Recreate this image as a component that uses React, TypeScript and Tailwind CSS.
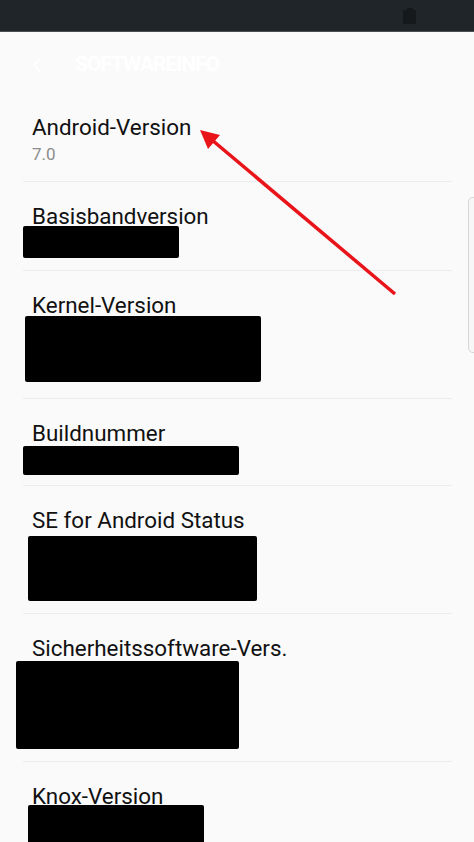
import React from "react";

type Row = {
  title: string;
  sub?: string;
  box?: string;
  pb: string;
};

// redaction boxes are placed per row, the way they sit in the screenshot
const ROWS: Row[] = [
  { title: "Android-Version", sub: "7.0", pb: "pb-[17px]" },
  { title: "Basisbandversion", box: "ml-[23px] w-[156px] h-[32px] -mt-[3px]", pb: "pb-[12px]" },
  { title: "Kernel-Version", box: "ml-[25px] w-[236px] h-[66px] -mt-[2px]", pb: "pb-[16px]" },
  { title: "Buildnummer", box: "ml-[23px] w-[216px] h-[29px] mt-0", pb: "pb-[10px]" },
  { title: "SE for Android Status", box: "ml-[28px] w-[229px] h-[65px] mt-[3px]", pb: "pb-[12px]" },
  { title: "Sicherheitssoftware-Vers.", box: "ml-[16px] w-[223px] h-[88px] mt-0", pb: "pb-[12px]" },
  { title: "Knox-Version", box: "ml-[28px] w-[176px] h-[50px] -mt-[4px]", pb: "pb-[12px]" },
];

function StatusBar() {
  return (
    <div className="h-[32px] shrink-0 bg-[#1f2528] border-b border-[#4b5053] flex items-start justify-end pr-[58px] pt-[8px]">
      {/* dim battery glyph */}
      <div className="flex flex-col items-center">
        <div className="w-[6px] h-[2px] bg-[#15191b] rounded-t-[1px]" />
        <div className="w-[13px] h-[14px] bg-[#15191b] rounded-[1px]" />
      </div>
    </div>
  );
}

function Header() {
  return (
    <div className="h-[64px] shrink-0 flex items-start pt-[19px]">
      <svg width="10" height="16" viewBox="0 0 10 16" className="ml-[32px] mt-[6px]">
        <path d="M8 1 L2 8 L8 15" fill="none" stroke="#ffffff" strokeWidth="1.6" />
      </svg>
      <span className="ml-[33px] text-[21px] leading-[26px] font-bold text-white tracking-[-0.05em]">
        SOFTWAREINFO
      </span>
    </div>
  );
}

export default function App() {
  return (
    <div className="relative w-[474px] h-[842px] overflow-hidden bg-[#fafafa] font-['Roboto','Liberation_Sans',sans-serif] flex flex-col">
      <StatusBar />
      <Header />

      <div className="flex flex-col pt-[18px]">
        {ROWS.map((row, i) => (
          <div key={row.title} className={i === 0 ? "" : "pt-[21px]"}>
            <div className={"flex flex-col " + row.pb}>
              <div className="pl-[32px] text-[22.4px] leading-[26px] text-[#111111]">
                {row.title}
              </div>
              {row.sub && (
                <div className="pl-[32px] mt-[4px] text-[17px] leading-[20px] text-[#8c8c8c]">
                  {row.sub}
                </div>
              )}
              {row.box && <div className={"bg-black rounded-[2px] " + row.box} />}
            </div>
            <div className="ml-[23px] w-[429px] h-px bg-[#ececec]" />
          </div>
        ))}
      </div>

      {/* scroll indicator */}
      <div className="absolute left-[468px] top-[197px] w-[12px] h-[156px] rounded-[5px] border border-[#d6d6d6] bg-[#f7f7f7]" />

      {/* red annotation arrow */}
      <svg className="absolute inset-0 pointer-events-none" width="474" height="842" viewBox="0 0 474 842">
        <line x1="395" y1="294" x2="212" y2="140" stroke="#e8141a" strokeWidth="3.5" />
        <polygon points="200,130 220,135 208,149" fill="#e8141a" />
      </svg>
    </div>
  );
}
